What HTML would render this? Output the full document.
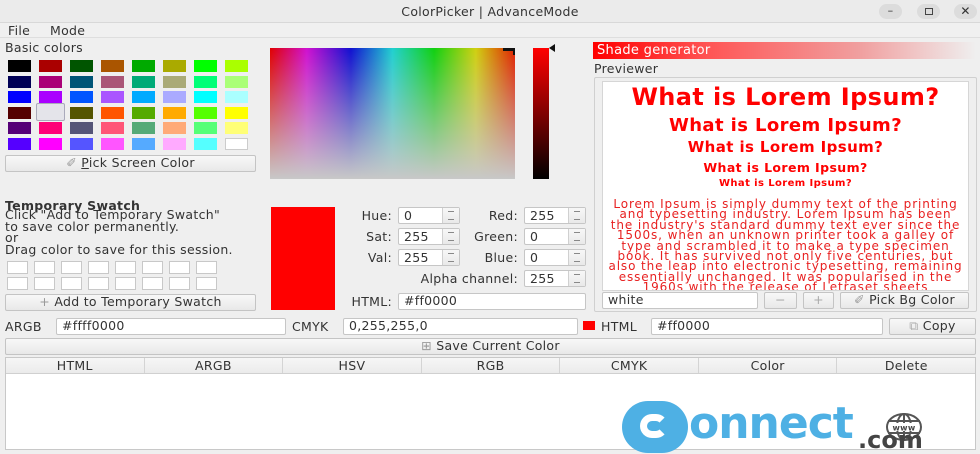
<!DOCTYPE html>
<html><head><meta charset="utf-8"><style>
*{box-sizing:border-box;margin:0;padding:0}
body{width:980px;height:450px;overflow:hidden;background:#efefef;font-family:"DejaVu Sans","Liberation Sans",sans-serif;font-size:12.5px;letter-spacing:.3px;color:#333;position:relative}
.a{position:absolute;white-space:nowrap}
.btn{position:absolute;background:linear-gradient(#f8f8f8,#e8e8e8);border:1px solid #c4c4c4;border-radius:2px;text-align:center;color:#333;line-height:14px}
.inp{position:absolute;background:#fff;border:1px solid #c6c6c6;border-radius:2px;padding-left:5px;line-height:14px;color:#333}
.sp{position:absolute;width:62px;height:17px;background:#fff;border:1px solid #c6c6c6;border-radius:2px;padding-left:5px;line-height:15px}
.sp:after{content:"";position:absolute;right:0;top:0;width:16px;height:15px;border-left:1px solid #d0d0d0;background:linear-gradient(#f7f7f7,#e9e9e9)}
.sp i{position:absolute;right:5px;top:3px;width:6px;height:9px;z-index:2;border-top:1px solid #888;border-bottom:1px solid #888}
.lbl{position:absolute;text-align:right;line-height:17px}
.sw{position:absolute;width:23px;height:12px}
.es{position:absolute;width:21px;height:13px;background:#fff;border:1px solid #c8c8c8}
.pv{position:absolute;left:0;width:365px;text-align:center;font-weight:bold;color:#f00;letter-spacing:.4px}
</style></head><body>
<div class="a" style="left:0;top:0;width:980px;height:23px;background:#ebebeb;border-bottom:1px solid #d8d8d8"></div>
<div class="a" style="left:0;top:4px;width:980px;text-align:center;font-size:12.5px;color:#333">ColorPicker | AdvanceMode</div>
<div class="a" style="left:879px;top:4px;width:23px;height:15px;border-radius:8px;background:#dcdcdc;text-align:center;line-height:14px;font-size:11px">–</div>
<div class="a" style="left:917px;top:4px;width:23px;height:15px;border-radius:8px;background:#dcdcdc"><div style="position:absolute;left:8px;top:4px;width:8px;height:7px;border:1px solid #444"></div></div>
<div class="a" style="left:954px;top:4px;width:23px;height:15px;border-radius:8px;background:#dcdcdc;text-align:center;line-height:15px;font-size:12px">✕</div>
<div class="a" style="left:0;top:23px;width:980px;height:15px;background:#f0f0f0;border-bottom:1px solid #dedede"></div>
<div class="a" style="left:8px;top:23px">File</div>
<div class="a" style="left:50px;top:23px">Mode</div>
<div class="a" style="left:5px;top:40px">Basic colors</div>
<div id="sw"></div>
<div class="a" style="left:36px;top:103px;width:29px;height:18px;border:1px solid #aab;border-radius:2px;background:#e4e4ea"></div>
<div class="btn" style="left:5px;top:155px;width:251px;height:17px"><span style="color:#999">✐</span> <u>P</u>ick Screen Color</div>
<div class="a" style="left:270px;top:48px;width:245px;height:131px;background:linear-gradient(to bottom,rgba(200,200,200,0),rgba(200,200,200,1)),linear-gradient(to right,#e00000,#d010d0 15%,#1010d0 33%,#20d0d0 50%,#10d010 67%,#d0d010 84%,#e02000)"></div>
<div class="a" style="left:503px;top:48px;width:12px;height:3px;background:#111"></div>
<div class="a" style="left:513px;top:48px;width:2px;height:7px;background:#111"></div>
<div class="a" style="left:533px;top:48px;width:16px;height:131px;background:linear-gradient(#ff0000,#000)"></div>
<div class="a" style="left:549px;top:44px;width:0;height:0;border-top:4px solid transparent;border-bottom:4px solid transparent;border-right:6px solid #111"></div>
<div class="a" style="left:593px;top:42px;width:383px;height:17px;background:linear-gradient(to right,#f00,#f55 30%,#f0a0a0 70%,#efefef);color:#fff;padding-left:4px;line-height:17px;font-size:13px">Shade generator</div>
<div class="a" style="left:594px;top:61px">Previewer</div>
<div class="a" style="left:594px;top:77px;width:383px;height:235px;border:1px solid #d0d0d0;border-radius:2px"></div>
<div class="a" style="left:602px;top:81px;width:367px;height:210px;background:#fff;border:1px solid #d6d6d6;overflow:hidden;white-space:normal">
<div class="pv" style="top:1px;font-size:24px;line-height:28px">What is Lorem Ipsum?</div>
<div class="pv" style="top:33px;font-size:18px;line-height:22px">What is Lorem Ipsum?</div>
<div class="pv" style="top:56px;font-size:15px;line-height:18px">What is Lorem Ipsum?</div>
<div class="pv" style="top:78px;font-size:12.5px;line-height:16px">What is Lorem Ipsum?</div>
<div class="pv" style="top:96px;font-size:10px;line-height:12px">What is Lorem Ipsum?</div>
<div class="pv" style="top:117px;font-weight:normal;font-size:12px;line-height:10.4px;letter-spacing:.9px;color:#e82020;white-space:nowrap">Lorem Ipsum is simply dummy text of the printing<br>and typesetting industry. Lorem Ipsum has been<br>the industry's standard dummy text ever since the<br>1500s, when an unknown printer took a galley of<br>type and scrambled it to make a type specimen<br>book. It has survived not only five centuries, but<br>also the leap into electronic typesetting, remaining<br>essentially unchanged. It was popularised in the<br>1960s with the release of Letraset sheets</div>
</div>
<div class="inp" style="left:602px;top:292px;width:156px;height:17px">white</div>
<div class="btn" style="left:764px;top:292px;width:33px;height:17px;color:#aaa">−</div>
<div class="btn" style="left:803px;top:292px;width:31px;height:17px;color:#aaa">+</div>
<div class="btn" style="left:840px;top:292px;width:129px;height:17px"><span style="color:#999">✐</span> Pick Bg Color</div>
<div class="a" style="left:5px;top:198px;font-weight:bold">Temporary Swatch</div>
<div class="a" style="left:5px;top:209px;line-height:11.5px">Click "Add to Temporary Swatch"<br>to save color permanently.<br>or<br>Drag color to save for this session.</div>
<div id="es"></div>
<div class="btn" style="left:5px;top:294px;width:251px;height:17px"><span style="color:#999">+</span> Add to Temporary Swatch</div>
<div class="a" style="left:271px;top:207px;width:64px;height:103px;background:#f00"></div>
<div class="lbl" style="left:340px;top:207px;width:52px">Hue:</div>
<div class="sp" style="left:398px;top:207px">0<i></i></div>
<div class="lbl" style="left:340px;top:228px;width:52px">Sat:</div>
<div class="sp" style="left:398px;top:228px">255<i></i></div>
<div class="lbl" style="left:340px;top:249px;width:52px">Val:</div>
<div class="sp" style="left:398px;top:249px">255<i></i></div>
<div class="lbl" style="left:460px;top:207px;width:58px">Red:</div>
<div class="sp" style="left:524px;top:207px">255<i></i></div>
<div class="lbl" style="left:460px;top:228px;width:58px">Green:</div>
<div class="sp" style="left:524px;top:228px">0<i></i></div>
<div class="lbl" style="left:460px;top:249px;width:58px">Blue:</div>
<div class="sp" style="left:524px;top:249px">0<i></i></div>
<div class="lbl" style="left:370px;top:270px;width:148px">Alpha channel:</div>
<div class="sp" style="left:524px;top:270px">255<i></i></div>
<div class="lbl" style="left:336px;top:293px;width:56px">HTML:</div>
<div class="inp" style="left:398px;top:293px;width:188px;height:17px">#ff0000</div>
<div class="a" style="left:5px;top:319px">ARGB</div>
<div class="inp" style="left:56px;top:318px;width:230px;height:17px">#ffff0000</div>
<div class="a" style="left:292px;top:319px">CMYK</div>
<div class="inp" style="left:343px;top:318px;width:235px;height:17px">0,255,255,0</div>
<div class="a" style="left:583px;top:321px;width:12px;height:9px;background:#f00"></div>
<div class="a" style="left:601px;top:319px">HTML</div>
<div class="inp" style="left:651px;top:318px;width:232px;height:17px">#ff0000</div>
<div class="btn" style="left:889px;top:318px;width:87px;height:17px"><span style="color:#aaa">⧉</span> Copy</div>
<div class="btn" style="left:5px;top:338px;width:971px;height:17px"><span style="color:#999">⊞</span> Save Current Color</div>
<div class="a" style="left:5px;top:357px;width:971px;height:93px;background:#fff;border:1px solid #c8c8c8"></div>
<div class="a" style="left:6px;top:358px;width:969px;height:16px;background:linear-gradient(#f6f6f6,#ebebeb);border-bottom:1px solid #d0d0d0;display:flex">
<div style="flex:1;text-align:center;border-right:1px solid #d4d4d4;line-height:15px">HTML</div>
<div style="flex:1;text-align:center;border-right:1px solid #d4d4d4;line-height:15px">ARGB</div>
<div style="flex:1;text-align:center;border-right:1px solid #d4d4d4;line-height:15px">HSV</div>
<div style="flex:1;text-align:center;border-right:1px solid #d4d4d4;line-height:15px">RGB</div>
<div style="flex:1;text-align:center;border-right:1px solid #d4d4d4;line-height:15px">CMYK</div>
<div style="flex:1;text-align:center;border-right:1px solid #d4d4d4;line-height:15px">Color</div>
<div style="flex:1;text-align:center;line-height:15px">Delete</div>
</div>
<div class="a" style="left:622px;top:401px;width:66px;height:52px;border-radius:26px;background:#4eb0e4"></div>
<div class="a" style="left:640px;top:414px;width:28px;height:24px;border-radius:12px;border:7px solid #fff;border-right-color:transparent"></div>
<div class="a" style="left:689px;top:398px;font-family:'DejaVu Sans',sans-serif;font-weight:bold;font-size:44px;color:#4eb0e4;letter-spacing:-1px">onnect</div>
<svg class="a" style="left:885px;top:412px" width="38" height="30" viewBox="0 0 38 30"><g fill="none" stroke="#555" stroke-width="2"><ellipse cx="19" cy="15" rx="17" ry="13"/><ellipse cx="19" cy="15" rx="7" ry="13"/><line x1="19" y1="2" x2="19" y2="28"/><line x1="3" y1="9" x2="35" y2="9"/><line x1="3" y1="21" x2="35" y2="21"/></g><rect x="4" y="11" width="30" height="8" fill="#fff"/><text x="19" y="18.5" font-size="8" font-weight="bold" text-anchor="middle" fill="#444" font-family="DejaVu Sans">www</text></svg>
<div class="a" style="left:858px;top:426px;font-weight:bold;font-size:24px;color:#444;letter-spacing:0">.com</div>
<script>
var c=[["#000","#a00","#050","#a50","#0a0","#aa0","#0f0","#af0"],["#005","#a07","#057","#a57","#0a7","#aa7","#0f7","#af7"],["#00f","#a0f","#05f","#a5f","#0af","#aaf","#0ff","#aff"],["#500","#f00","#550","#f50","#5a0","#fa0","#5f0","#ff0"],["#507","#f07","#557","#f57","#5a7","#fa7","#5f7","#ff7"],["#50f","#f0f","#55f","#f5f","#5af","#faf","#5ff","#fff"]];
var h="";var ys=[60,76,91,107,122,138];
for(var r=0;r<6;r++)for(var k=0;k<8;k++)h+='<div class="sw" style="left:'+(8+k*31)+'px;top:'+ys[r]+'px;background:'+c[r][k]+';'+(c[r][k]=="#fff"?'border:1px solid #ccc':'')+'"></div>';
document.getElementById("sw").innerHTML=h;
h="";for(var r=0;r<2;r++)for(var k=0;k<8;k++)h+='<div class="es" style="left:'+(7+k*27)+'px;top:'+(261+r*16)+'px"></div>';
document.getElementById("es").innerHTML=h;
</script>
</body></html>
